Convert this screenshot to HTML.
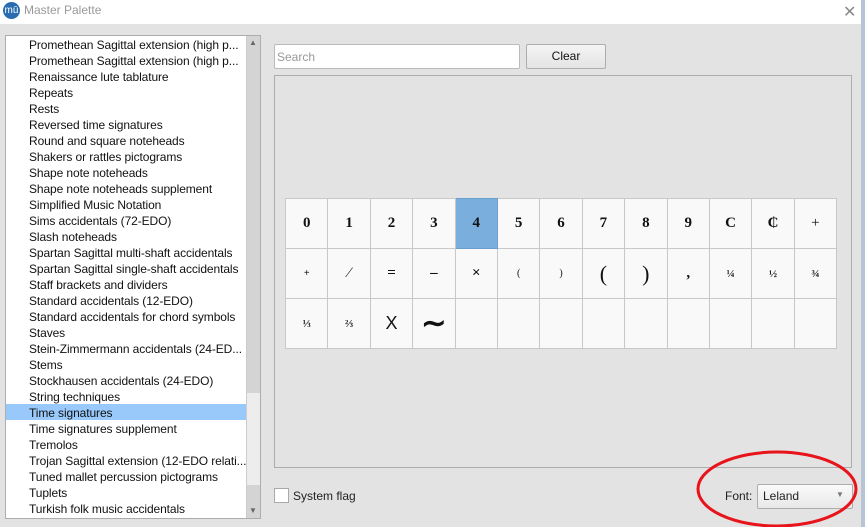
<!DOCTYPE html><html><head><style>
body{margin:0;width:865px;height:527px;background:#e3e3e3;font-family:"Liberation Sans",sans-serif;position:relative;overflow:hidden}
.a{position:absolute}
.t{left:0;top:0;width:862px;height:24px;background:#fff}
.list{left:5px;top:35px;width:254px;height:482px;background:#fff;border:1px solid #adadad;overflow:hidden}
.it{position:absolute;left:23px;font-size:12px;color:#111;height:16px;line-height:16px;white-space:nowrap;letter-spacing:-0.1px}
.sel{position:absolute;left:0;width:240px;top:368px;height:16px;background:#99c9fb}
table{border-collapse:collapse;position:absolute;left:285px;top:198px;background:#f9f9f9}
td{width:41.4px;height:49px;border:1px solid #c8c8c8;text-align:center;font-family:"Liberation Serif",serif;font-weight:bold;font-size:15px;color:#111;padding:0}
</style></head><body>
<div class="a t"></div>
<div class="a" style="left:3px;top:2px;width:17px;height:17px;border-radius:50%;background:#2a6cb0;color:#fff;font-size:10px;text-align:center;line-height:17px">mū</div>
<div class="a" style="left:24px;top:3px;font-size:12px;color:#999">Master Palette</div>
<div class="a" style="left:843px;top:2px;font-size:16px;color:#888">✕</div>
<div class="a" style="left:861px;top:0;width:4px;height:527px;background:#b8c4d6"></div>
<div class="a list">
<div class="sel"></div>
<div class="it" style="top:1px">Promethean Sagittal extension (high p...</div>
<div class="it" style="top:17px">Promethean Sagittal extension (high p...</div>
<div class="it" style="top:33px">Renaissance lute tablature</div>
<div class="it" style="top:49px">Repeats</div>
<div class="it" style="top:65px">Rests</div>
<div class="it" style="top:81px">Reversed time signatures</div>
<div class="it" style="top:97px">Round and square noteheads</div>
<div class="it" style="top:113px">Shakers or rattles pictograms</div>
<div class="it" style="top:129px">Shape note noteheads</div>
<div class="it" style="top:145px">Shape note noteheads supplement</div>
<div class="it" style="top:161px">Simplified Music Notation</div>
<div class="it" style="top:177px">Sims accidentals (72-EDO)</div>
<div class="it" style="top:193px">Slash noteheads</div>
<div class="it" style="top:209px">Spartan Sagittal multi-shaft accidentals</div>
<div class="it" style="top:225px">Spartan Sagittal single-shaft accidentals</div>
<div class="it" style="top:241px">Staff brackets and dividers</div>
<div class="it" style="top:257px">Standard accidentals (12-EDO)</div>
<div class="it" style="top:273px">Standard accidentals for chord symbols</div>
<div class="it" style="top:289px">Staves</div>
<div class="it" style="top:305px">Stein-Zimmermann accidentals (24-ED...</div>
<div class="it" style="top:321px">Stems</div>
<div class="it" style="top:337px">Stockhausen accidentals (24-EDO)</div>
<div class="it" style="top:353px">String techniques</div>
<div class="it" style="top:369px">Time signatures</div>
<div class="it" style="top:385px">Time signatures supplement</div>
<div class="it" style="top:401px">Tremolos</div>
<div class="it" style="top:417px">Trojan Sagittal extension (12-EDO relati...</div>
<div class="it" style="top:433px">Tuned mallet percussion pictograms</div>
<div class="it" style="top:449px">Tuplets</div>
<div class="it" style="top:465px">Turkish folk music accidentals</div>
<div class="a" style="left:240px;top:0;width:14px;height:482px;background:#d4d4d4;border-left:1px solid #ccc"></div>
<div class="a" style="left:241px;top:357px;width:13px;height:92px;background:#ededed"></div>
<div class="a" style="left:243px;top:2px;font-size:8px;color:#666">▲</div>
<div class="a" style="left:243px;top:470px;font-size:8px;color:#666">▼</div>
</div>
<div class="a" style="left:274px;top:44px;width:244px;height:23px;background:#fff;border:1px solid #bbb;border-radius:2px"></div>
<div class="a" style="left:277px;top:50px;font-size:12px;color:#999">Search</div>
<div class="a" style="left:526px;top:44px;width:78px;height:23px;background:linear-gradient(#f4f4f4,#e4e4e4);border:1px solid #adadad;border-radius:2px;font-size:12px;text-align:center;line-height:23px;color:#111">Clear</div>
<div class="a" style="left:274px;top:75px;width:576px;height:391px;border:1px solid #adadad"></div>
<table>
<tr><td>0</td><td>1</td><td>2</td><td>3</td><td style="background:#7aaedc;border-color:#6a9fd0">4</td><td>5</td><td>6</td><td>7</td><td>8</td><td>9</td><td>C</td><td>₵</td><td style="font-weight:normal">+</td></tr>
<tr><td style="font-size:10px">+</td><td style="font-weight:normal">⁄</td><td>=</td><td>–</td><td>×</td><td style="font-size:10px;font-weight:normal">(</td><td style="font-size:10px;font-weight:normal">)</td><td style="font-size:22px;font-weight:normal">(</td><td style="font-size:22px;font-weight:normal">)</td><td>,</td><td style="font-size:11px">¼</td><td style="font-size:11px">½</td><td style="font-size:11px">¾</td></tr>
<tr><td style="font-size:11px">⅓</td><td style="font-size:11px">⅔</td><td style="font-family:'Liberation Sans';font-weight:normal;font-size:18px">X</td><td style="font-size:30px">∼</td><td></td><td></td><td></td><td></td><td></td><td></td><td></td><td></td><td></td></tr>
</table>
<div class="a" style="left:274px;top:488px;width:13px;height:13px;background:#fff;border:1px solid #aaa"></div>
<div class="a" style="left:293px;top:489px;font-size:12px;color:#222">System flag</div>
<div class="a" style="left:725px;top:489px;font-size:12px;color:#222">Font:</div>
<div class="a" style="left:757px;top:484px;width:94px;height:23px;background:linear-gradient(#fafafa,#e8e8e8);border:1px solid #adadad;border-radius:2px"></div>
<div class="a" style="left:763px;top:489px;font-size:12px;color:#222">Leland</div>
<div class="a" style="left:836px;top:490px;font-size:8px;color:#777">▼</div>
<svg class="a" style="left:0;top:0" width="865" height="527"><ellipse cx="777" cy="489" rx="79" ry="37" fill="none" stroke="#e8141c" stroke-width="3"/></svg>
</body></html>
